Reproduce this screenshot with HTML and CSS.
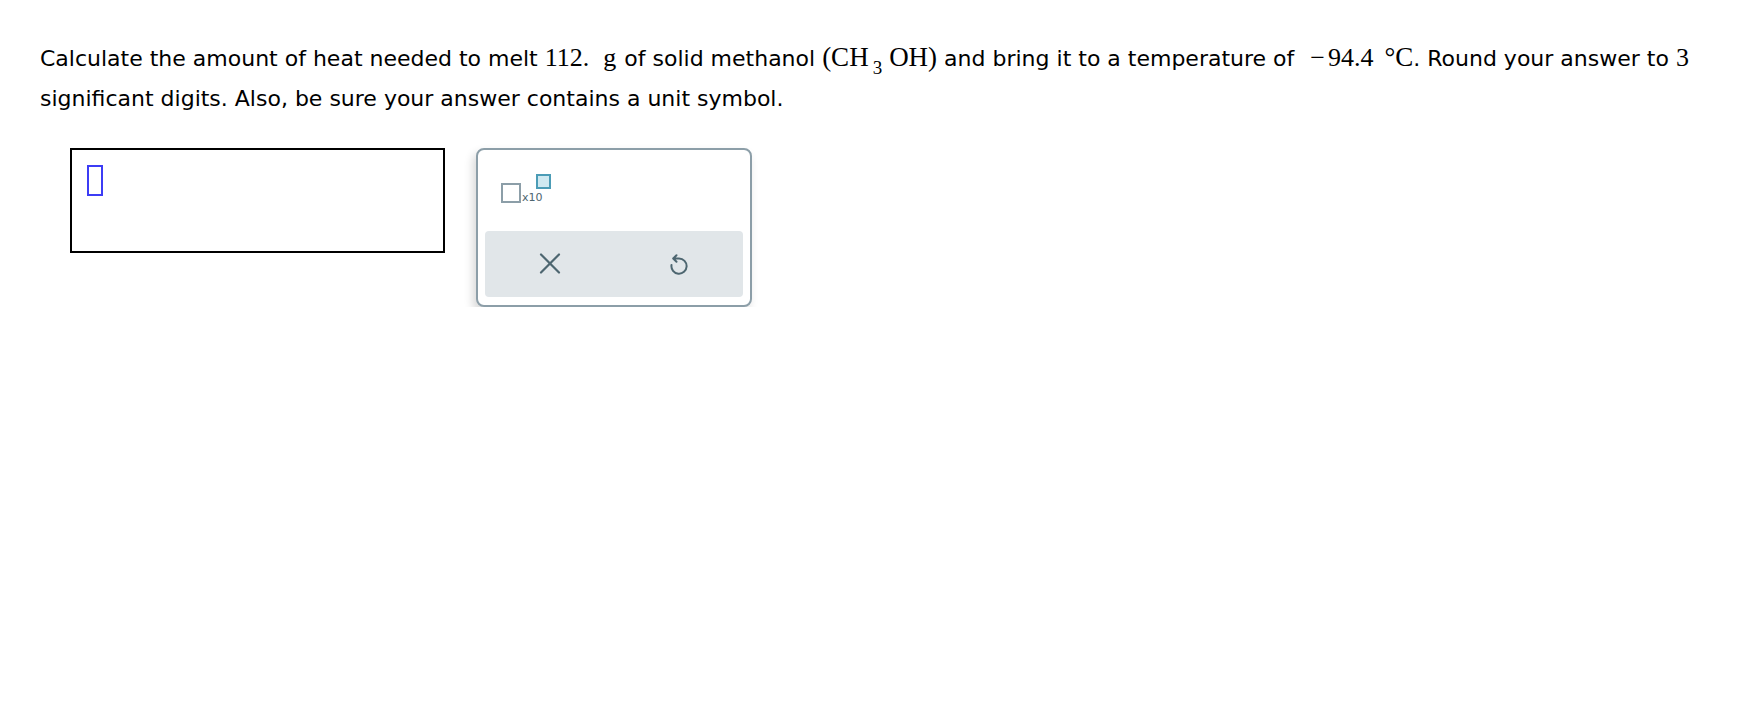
FILE: index.html
```html
<!DOCTYPE html>
<html lang="en">
<head>
<meta charset="utf-8">
<title>Question</title>
<link rel="stylesheet" href="styles.css">
</head>
<body>
<div class="question">
  <p class="prompt">Calculate the amount of heat needed to melt <span class="m">112.<span class="unit">g</span></span> of solid methanol <span class="m formula">(CH<sub class="sub">3</sub>OH)</span> and bring it to a temperature of <span class="m"><span class="minus">−</span>94.4<span class="deg">°C</span></span>. Round your answer to <span class="m">3</span> significant digits. Also, be sure your answer contains a unit symbol.</p>
  <div class="answer">
    <div class="input"><div class="cursor"></div></div>
    <div class="card">
      <div class="tools">
        <div class="sci">
          <span class="base-box"></span>
          <span class="x10">x10</span>
          <span class="exp-box"></span>
        </div>
      </div>
      <div class="actions">
        <div class="btn">
          <svg width="24" height="24" viewBox="0 0 24 24"><path d="M3 2.5 L21 20.5 M21 2.5 L3 20.5" fill="none" stroke="#4d6670" stroke-width="2.2" stroke-linecap="round"/></svg>
        </div>
        <div class="btn">
          <svg width="24" height="24" viewBox="0 0 24 24"><path d="M12 6.5 H6.5 M9.5 3.2 L6.2 6.5 L9.5 9.8 M12 6.5 A7.6 7.6 0 1 1 4.5 13" fill="none" stroke="#4d6670" stroke-width="2" stroke-linecap="round" stroke-linejoin="round"/></svg>
        </div>
      </div>
    </div>
  </div>
</div>
</body>
</html>
```

FILE: styles.css
```css
body {
  margin: 0;
  background: #ffffff;
  color: #000000;
  font-family: "DejaVu Sans", Verdana, sans-serif;
}

.question {
  padding: 37px 40px 0 40px;
}

.prompt {
  margin: 0;
  font-size: 22px;
  line-height: 40px;
}

.m {
  font-family: "Liberation Serif", "Times New Roman", serif;
  font-size: 26px;
}

.formula {
  font-size: 27px;
}

.unit {
  margin-left: 14px;
  margin-right: 1px;
}

.sub {
  font-size: 19px;
  vertical-align: -8px;
  line-height: 0;
  margin: 0 7px 0 4px;
}

.minus {
  margin-left: 9px;
  margin-right: 3px;
}

.deg {
  margin-left: 11px;
  font-size: 27px;
}

.answer {
  display: flex;
  align-items: flex-start;
  gap: 31px;
  margin: 29px 0 0 30px;
}

.input {
  width: 375px;
  height: 105px;
  box-sizing: border-box;
  border: 2px solid #000000;
  padding: 15px 0 0 15px;
}

.cursor {
  width: 16px;
  height: 31px;
  box-sizing: border-box;
  border: 2px solid #3c3cf5;
}

.card {
  width: 276px;
  height: 159px;
  box-sizing: border-box;
  border: 2px solid #8c9ea8;
  border-radius: 8px;
  padding: 0 7px 8px 7px;
  display: flex;
  flex-direction: column;
  box-shadow: -3px 5px 10px rgba(0, 0, 0, 0.16);
  background: #ffffff;
}

.tools {
  height: 81px;
}

.sci {
  display: flex;
  align-items: flex-start;
  margin: 24px 0 0 16px;
}

.base-box {
  width: 20px;
  height: 20px;
  box-sizing: border-box;
  border: 2px solid #8c9ea8;
  margin-top: 9px;
}

.x10 {
  font-family: "DejaVu Sans", Verdana, sans-serif;
  font-size: 11px;
  line-height: 11px;
  color: #4d6670;
  margin-top: 18px;
  margin-left: 1px;
}

.exp-box {
  width: 15px;
  height: 15px;
  box-sizing: border-box;
  border: 2px solid #4b9cb6;
  background: #cfe9f1;
  margin-left: -7px;
}

.actions {
  display: flex;
  height: 66px;
  background: #e1e6e9;
  border-radius: 4px;
}

.btn {
  flex: 1;
  display: flex;
  align-items: center;
  justify-content: center;
}
```
